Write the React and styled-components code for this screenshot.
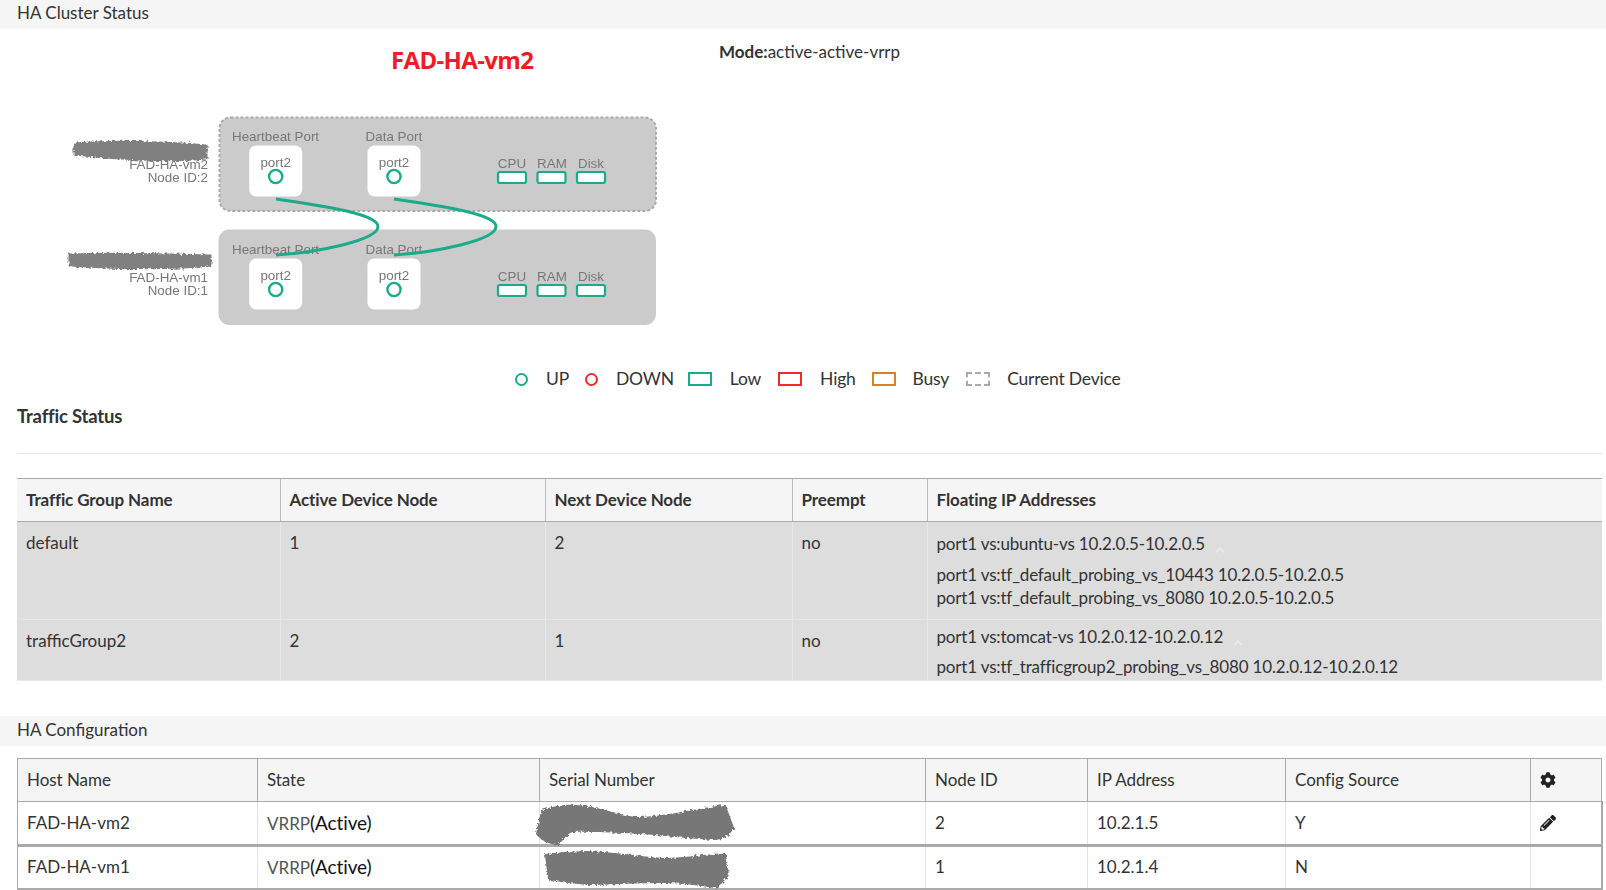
import React from "react";
import styled, { createGlobalStyle } from "styled-components";
import { FaCog, FaPencilAlt, FaChevronUp } from "react-icons/fa";

const Global = createGlobalStyle`
  html, body { margin: 0; padding: 0; background: #fff; overflow: hidden; }
  body { font-family: Lato, "Liberation Sans", sans-serif; font-size: 16px; color: #333; }
`;
const Page = styled.div`width: 1606px; height: 890px; overflow: hidden;`;
const SectionBar = styled.div`
  height: ${p => p.$h}px; line-height: ${p => p.$lh}px; background: #f5f5f5;
  padding-left: 17px; font-size: 17px; color: #333;
`;
const TopRow = styled.div`display: flex; height: 81px; align-items: flex-start;`;
const HostTitle = styled.div`
  width: 719px; padding: 16px 0 0 391px; box-sizing: border-box; font-size: 24px; font-weight: 700;
  color: #ee1c25; font-family: "Open Sans", Lato, sans-serif; letter-spacing: -0.65px; line-height: 30px; white-space: nowrap;
`;
const Mode = styled.div`padding-top: 12px; font-size: 17px; line-height: 22px; b { font-weight: 700; }`;
const Diagram = styled.svg`
  display: block; width: 680px; height: 225px; filter: blur(0.3px);
  text { font-family: "Liberation Sans", sans-serif; fill: #777; font-size: 13.4px; }
`;
const Legend = styled.div`
  display: flex; align-items: center; height: 24px; margin-top: 31px; padding-left: 515px;
  font-size: 17.5px; letter-spacing: -0.2px; color: #333;
`;
const LegendLabel = styled.span`margin-left: ${p => p.$l}px; margin-right: ${p => p.$r}px; white-space: nowrap;`;
const Dot = styled.span`width: 9px; height: 9px; border-radius: 50%; border: 2px solid ${p => p.$c}; margin-top: 3px; flex: none;`;
const Swatch = styled.span`width: 20px; height: 10px; border: 2px ${p => p.$dash ? "dashed" : "solid"} ${p => p.$c}; flex: none; margin-top: 2px;`;
const SubTitle = styled.div`
  margin: 11px 0 0 17px; height: 30px; line-height: 30px; font-size: 18.5px; font-weight: 700; letter-spacing: -0.2px; color: #333;
`;
const Rule = styled.div`height: 1px; background: #e5e5e5; margin: 22px 4px 0 17px;`;
const Table = styled.table`
  border-collapse: collapse; table-layout: fixed; margin-left: 17px; width: ${p => p.$w}px;
  font-size: 17px; color: #333;
`;
const TrafficWrap = styled.div`margin-top: 24px;`;
const THead = styled.th`
  background: #f5f5f5; text-align: left; font-weight: 700; height: 43px; padding: 0 9px 2px; box-sizing: border-box; font-size: 17px; letter-spacing: -0.1px;
  border-top: 1px solid #aaa; border-bottom: 1px solid #aaa; border-left: 1px solid #bbb;
  &:first-child { border-left: none; }
`;
const TrafficRow = styled.tr`background: #ddd; height: ${p => p.$h}px; border-bottom: 1px solid #e8e8e8;`;
const TCell = styled.td`
  vertical-align: top; padding: ${p => p.$pt ?? 10}px 9px 0; border-left: 1px solid #e8e8e8; box-sizing: border-box; white-space: nowrap;
  line-height: 22px;
  &:first-child { border-left: none; }
`;
const IpLine = styled.div`line-height: 22px; letter-spacing: -0.17px; margin-top: ${p => p.$mt || 0}px; display: flex; align-items: center;`;
const Caret = styled(FaChevronUp)`color: #ececec; width: 14px; height: 10px; margin: 12px 0 0 8px;`;
const ConfigBarWrap = styled.div`margin-top: 35px;`;
const ConfigTableWrap = styled.div`margin-top: 12px;`;
const CHead = styled.th`
  background: #f5f5f5; text-align: left; font-weight: 400; height: 43px; padding: 0 9px 1px; box-sizing: border-box; font-size: 17px; letter-spacing: -0.05px;
  border: 1px solid #aaa;
`;
const CRow = styled.tr`height: ${p => p.$h}px; border-bottom: ${p => p.$b}px solid #aaa;`;
const CCell = styled.td`
  padding: 0 9px 1px; box-sizing: border-box; border-left: 1px solid #e5e5e5; white-space: nowrap;
  &:first-child { border-left: 1px solid #aaa; }
  &:last-child { border-right: 2px solid #aaa; }
`;
const SerialCell = styled(CCell)`position: relative; padding: 0;`;
const Smudge = styled.svg`position: absolute; left: ${p => p.$l}px; top: ${p => p.$t}px; overflow: visible; pointer-events: none;`;
const Active = styled.span`color: #111; font-size: 19px; letter-spacing: -0.1px;`;
const State = styled.span`color: #555;`;
const Gear = styled(FaCog)`display: block; width: 16px; height: 16px; color: #222;`;
const Pen = styled(FaPencilAlt)`display: block; width: 16px; height: 16px; color: #222;`;

const Port = ({ x, y }) => (
  <g>
    <rect x={x - 26.5} y={y} width="53" height="51" rx="7" fill="#fff" />
    <text x={x} y={y + 21.5} textAnchor="middle">port2</text>
    <circle cx={x} cy={y + 31} r="6.6" fill="none" stroke="#1aab8a" strokeWidth="2.4" />
  </g>
);
const Bars = ({ y }) => (
  <g>
    <text x="512" y={y - 1} textAnchor="middle">CPU</text>
    <text x="552" y={y - 1} textAnchor="middle">RAM</text>
    <text x="591" y={y - 1} textAnchor="middle">Disk</text>
    {[498, 537.5, 577].map(x => (
      <rect key={x} x={x} y={y + 3.5} width="28" height="11" rx="2" fill="#fff" stroke="#1aab8a" strokeWidth="2.2" />
    ))}
  </g>
);
const Node = ({ top, dashed, name, id, left = 219.5, height = 93.5, panelTop = top }) => (
  <g>
    <rect x={left} y={panelTop} width={656 - left} height={height} rx="11" fill="#cbcbcb"
      stroke={dashed ? "#aaa" : "none"} strokeWidth="2" strokeDasharray={dashed ? "3 2" : undefined} />
    <text x="232" y={top + 23.5}>Heartbeat Port</text>
    <text x="365.6" y={top + 23.5}>Data Port</text>
    <Port x={275.7} y={top + 28} />
    <Port x={394} y={top + 28} />
    <Bars y={top + 51} />
    <text x="208" y={top + 51} textAnchor="end">{name}</text>
    <text x="208" y={top + 64.5} textAnchor="end">{id}</text>
  </g>
);
const Link = ({ dx }) => (
  <path transform={`translate(${dx} 0)`} d="M276 199 C 315 205 378 213 378 226.5 C 378 240 320 252 276 255"
    fill="none" stroke="#1aab8a" strokeWidth="3" />
);

const Row = ({ cells, h, ip, pt }) => (
  <TrafficRow $h={h}>
    {cells.map(c => <TCell key={c}>{c}</TCell>)}
    <TCell $pt={pt}>{ip}</TCell>
  </TrafficRow>
);

export default function App() {
  return (
    <Page>
      <Global />
      <SectionBar $h={29} $lh={25}>HA Cluster Status</SectionBar>
      <TopRow>
        <HostTitle>FAD-HA-vm2</HostTitle>
        <Mode><b>Mode:</b>active-active-vrrp</Mode>
      </TopRow>
      <Diagram viewBox="0 110 680 225">
        <defs>
          <filter id="rough" x="-10%" y="-40%" width="120%" height="180%">
            <feTurbulence type="fractalNoise" baseFrequency="0.35" numOctaves="2" seed="4" />
            <feDisplacementMap in="SourceGraphic" scale="5" />
          </filter>
        </defs>
        <Node top={117.5} dashed name="FAD-HA-vm2" id="Node ID:2" />
        <Node top={230.5} panelTop={229.5} left={218.5} height={95.5} name="FAD-HA-vm1" id="Node ID:1" />
        <Link dx={0} />
        <Link dx={118} />
        <path d="M75 144 C 110 141 170 142 206 146 L 206 158 C 170 162 110 158 75 154 Z" fill="#808080" stroke="#808080" strokeWidth="3" filter="url(#rough)" />
        <path d="M70 255 C 110 253 170 255 210 256 L 210 265 C 170 269 110 268 70 265 Z" fill="#808080" stroke="#808080" strokeWidth="3" filter="url(#rough)" />
      </Diagram>
      <Legend>
        <Dot $c="#1aab8a" /><LegendLabel $l={18} $r={16}>UP</LegendLabel>
        <Dot $c="#ee2a2a" /><LegendLabel $l={18} $r={14}>DOWN</LegendLabel>
        <Swatch $c="#1aab8a" /><LegendLabel $l={18} $r={17}>Low</LegendLabel>
        <Swatch $c="#ee2a2a" /><LegendLabel $l={18} $r={16}>High</LegendLabel>
        <Swatch $c="#d8821f" /><LegendLabel $l={17} $r={17}>Busy</LegendLabel>
        <Swatch $c="#aaa" $dash /><LegendLabel $l={17} $r={0}>Current Device</LegendLabel>
      </Legend>
      <SubTitle>Traffic Status</SubTitle>
      <Rule />
      <TrafficWrap>
        <Table $w={1585}>
          <colgroup>
            <col width="263" /><col width="265" /><col width="247" /><col width="135" /><col width="675" />
          </colgroup>
          <thead>
            <tr>
              <THead>Traffic Group Name</THead><THead>Active Device Node</THead><THead>Next Device Node</THead><THead>Preempt</THead><THead>Floating IP Addresses</THead>
            </tr>
          </thead>
          <tbody>
            <Row h={98} cells={["default", "1", "2", "no"]} pt={11} ip={<>
              <IpLine>port1 vs:ubuntu-vs 10.2.0.5-10.2.0.5<Caret /></IpLine>
              <IpLine $mt={9}>port1 vs:tf_default_probing_vs_10443 10.2.0.5-10.2.0.5</IpLine>
              <IpLine $mt={1}>port1 vs:tf_default_probing_vs_8080 10.2.0.5-10.2.0.5</IpLine>
            </>} />
            <Row h={61} cells={["trafficGroup2", "2", "1", "no"]} pt={6} ip={<>
              <IpLine>port1 vs:tomcat-vs 10.2.0.12-10.2.0.12<Caret /></IpLine>
              <IpLine $mt={8}>port1 vs:tf_trafficgroup2_probing_vs_8080 10.2.0.12-10.2.0.12</IpLine>
            </>} />
          </tbody>
        </Table>
      </TrafficWrap>
      <ConfigBarWrap>
        <SectionBar $h={30} $lh={28}>HA Configuration</SectionBar>
      </ConfigBarWrap>
      <ConfigTableWrap>
        <Table $w={1584}>
          <colgroup>
            <col width="240" /><col width="282" /><col width="386" /><col width="162" /><col width="198" /><col width="245" /><col width="71" />
          </colgroup>
          <thead>
            <tr>
              <CHead>Host Name</CHead><CHead>State</CHead><CHead>Serial Number</CHead><CHead>Node ID</CHead><CHead>IP Address</CHead><CHead>Config Source</CHead><CHead><Gear /></CHead>
            </tr>
          </thead>
          <tbody>
            <CRow $h={44} $b={3}>
              <CCell>FAD-HA-vm2</CCell>
              <CCell><State>VRRP</State><Active>(Active)</Active></CCell>
              <SerialCell>
                <Smudge $l={-4} $t={2} width="200" height="42">
                  <path d="M6 7 C 18 3 30 1 41 2 C 65 3 85 14 103 14 C 130 14 165 4 189 2 L 197 24 C 192 32 186 35 179 35 C 150 34 125 30 103 29 C 80 28 55 26 36 27 C 28 30 26 38 21 40 C 12 39 5 35 1 30 Z"
                    fill="#777" stroke="#777" strokeWidth="2" filter="url(#rough)" />
                </Smudge>
              </SerialCell>
              <CCell>2</CCell><CCell>10.2.1.5</CCell><CCell>Y</CCell><CCell><Pen /></CCell>
            </CRow>
            <CRow $h={43} $b={2}>
              <CCell>FAD-HA-vm1</CCell>
              <CCell><State>VRRP</State><Active>(Active)</Active></CCell>
              <SerialCell>
                <Smudge $l={6} $t={3} width="190" height="38">
                  <path d="M0 5 C 14 3 28 2 42 2 C 70 3 95 8 118 9 C 140 9 160 5 179 4 L 182 25 C 178 30 174 35 169 37 C 150 34 135 32 118 32 C 90 32 65 34 42 34 C 28 33 14 31 3 29 Z"
                    fill="#777" stroke="#777" strokeWidth="2" filter="url(#rough)" />
                </Smudge>
              </SerialCell>
              <CCell>1</CCell><CCell>10.2.1.4</CCell><CCell>N</CCell><CCell />
            </CRow>
          </tbody>
        </Table>
      </ConfigTableWrap>
    </Page>
  );
}
